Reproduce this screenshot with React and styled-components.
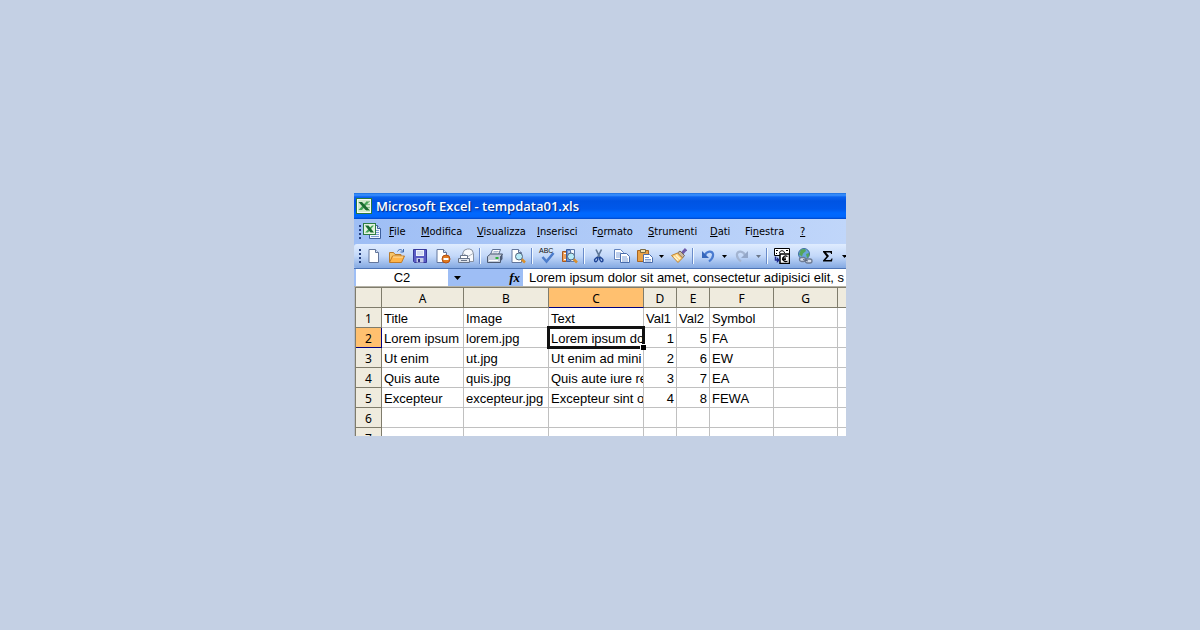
import { useState } from 'react';
import styled, { createGlobalStyle } from 'styled-components';

const GlobalStyle = createGlobalStyle`
    * {
        box-sizing: border-box;
    }

    body {
        margin: 0;
        background: #c4d0e4;
        font-family: "Liberation Sans", Arial, sans-serif;
        font-size: 13px;
        color: #000;
    }

    button, input {
        font: inherit;
        color: inherit;
        border: 0;
        padding: 0;
        margin: 0;
        background: none;
    }
`;

const Page = styled.main`
    min-height: 100vh;
    display: flex;
    align-items: center;
    justify-content: center;
    padding-bottom: 1px;
`;

const Window = styled.section`
    width: 41%;
    min-width: 320px;
    overflow: hidden;
    background: #9ebef5;
`;

const TitleBar = styled.header`
    height: 26px;
    display: flex;
    align-items: center;
    gap: 4px;
    padding: 0 2px;
    background: linear-gradient(#1c6fe0 0, #3c92ff 2px, #0a62ee 4px, #0054e3 8px, #0058ea 16px, #0068ff 20px, #0066fc 24px, #0046c8 26px);

    h1 {
        margin: 0;
        font: 600 13px "Open Sans", "Noto Sans", sans-serif;
        color: #fff;
        text-shadow: 1px 1px 1px #0a2a80;
        white-space: nowrap;
    }
`;

const Grip = styled.span`
    flex: none;
    width: 2px;
    height: 14px;
    margin-right: 1px;
    background: repeating-linear-gradient(#27417f 0 2px, transparent 2px 4px);
`;

const MenuBar = styled.nav`
    height: 25px;
    display: flex;
    align-items: center;
    padding-left: 5px;
    background: linear-gradient(90deg, #9ebef5, #c0d6fa);

    svg {
        flex: none;
        margin: 0 1px 2px;
    }
`;

const MenuButton = styled.button`
    flex: none;
    width: ${({ $width }) => $width}px;
    padding-left: 7px;
    text-align: left;
    font: 11px/16px "DejaVu Sans Condensed", "Noto Sans", sans-serif;
    white-space: nowrap;
`;

const Toolbar = styled.div`
    height: 24px;
    display: flex;
    align-items: center;
    padding-left: 5px;
    border-radius: 3px 0 0 3px;
    background: linear-gradient(#dfecff, #c3d8f9 50%, #84a9e2);
`;

const ToolButton = styled.button`
    flex: none;
    width: 23px;
    height: 22px;
    display: flex;
    align-items: center;
    justify-content: center;
`;

const ArrowButton = styled(ToolButton)`
    width: 11px;
    opacity: ${({ $dim }) => $dim ? .45 : 1};
`;

const Separator = styled.span`
    flex: none;
    width: 2px;
    height: 16px;
    margin: 0 2px;
    background: linear-gradient(90deg, #6a8ccb 50%, #f1f9ff 50%);
`;

const FormulaBar = styled.div`
    height: 18px;
    display: flex;
    padding-left: 2px;
    border-top: 1px solid #4f75b5;
    background: #9ebef5;
`;

const NameBox = styled.input`
    flex: none;
    width: 92px;
    background: #fff;
    text-align: center;
    outline: 0;
`;

const NameArrow = styled(ArrowButton)`
    width: 18px;
    height: 17px;
`;

const FxButton = styled.button`
    flex: none;
    width: 57px;
    padding-right: 3px;
    text-align: right;
    font: italic bold 13px/16px "Liberation Serif", "Times New Roman", serif;
`;

const FormulaInput = styled.input`
    flex: 1;
    min-width: 0;
    padding-left: 6px;
    background: #fff;
    outline: 0;
`;

const Sheet = styled.div`
    max-height: 150px;
    overflow: hidden;
    padding-left: 1px;
    border-top: 1px solid #b5b2a6;
    background: #b4bccb;
`;

const Table = styled.table`
    width: 100%;
    table-layout: fixed;
    border-collapse: separate;
    border-spacing: 0;
    border-top: 1px solid #7f7c6c;
    border-left: 1px solid #7f7c6c;
    background: #fff;

    tr > :last-child {
        border-right: 0;
    }
`;

const HeadCell = styled.th`
    height: 20px;
    padding: 0;
    border-right: 1px solid ${({ $active, $row }) => $active && $row ? '#00007f' : '#7f7c6c'};
    border-bottom: 1px solid ${({ $active }) => $active ? '#00007f' : '#7f7c6c'};
    background: ${({ $active }) => $active ? '#ffc06f' : '#efebde'};
    font: 12px/19px "Noto Sans", "DejaVu Sans", sans-serif;
    text-align: center;

    span {
        display: block;
        height: 19px;
        padding-top: 2px;
        line-height: 17px;
    }
`;

const Cell = styled.td`
    position: relative;
    height: 20px;
    padding: 0;
    border-right: 1px solid #c0c0c0;
    border-bottom: 1px solid #c0c0c0;
    text-align: ${({ $number }) => $number ? 'right' : 'left'};
`;

const CellText = styled.div`
    overflow: hidden;
    height: 19px;
    padding: 2px 2px 0;
    line-height: 17px;
    white-space: nowrap;
`;

const Selection = styled.span`
    position: absolute;
    inset: -2px;
    z-index: 1;
    border: 3px solid #111;
    pointer-events: none;

    &::after {
        content: '';
        position: absolute;
        right: -4px;
        bottom: -4px;
        width: 5px;
        height: 5px;
        background: #000;
        border-top: 1px solid #fff;
        border-left: 1px solid #fff;
    }
`;

const Icon = ({ children, size = 16 }) => (
    <svg width={size} height={size} viewBox="0 0 16 16" aria-hidden="true">{children}</svg>
);

const Sheetlet = () => <>
    <path d="M3 1.5h6.5l3 3v10H3z" fill="#fff" stroke="#63769c" />
    <path d="M9.500 1.500v3h3" fill="#d5e2f7" stroke="#63769c" />
</>;

const Magnifier = () => <>
    <path d="m11.500 11 3.500 3.500" stroke="#d98f2c" strokeWidth="2.500" />
    <circle cx="9" cy="8.500" r="3.500" fill="#b8ecf8" stroke="#54657e" />
</>;

const ExcelLogo = () => (
    <Icon>
        <path d="M0 0h16v16H0z" fill="#2b7a3c" />
        <path d="M1 1h14v14H1z" fill="#f7fbf3" />
        <path d="M2 2h12v12H2z" fill="#d3e9cd" />
        <path d="M10 3.500h4M11 6.500h3M11 9.500h3M10 12.500h4" stroke="#8cc08c" />
        <path d="M13 4h-3L2.500 12H6z" fill="#45a557" />
        <path d="M2.500 4H6l7.500 8h-4z" fill="#1b6b30" />
    </Icon>
);

const WorkbookLogo = () => (
    <svg width="18" height="16" viewBox="0 0 18 16" aria-hidden="true">
        <path d="M6.500 2.500h8l3 3v10h-11z" fill="#eef4ff" stroke="#3e5f9d" />
        <path d="M14.500 2.500v3h3" fill="#c8daf6" stroke="#3e5f9d" />
        <path d="M13 7.500h3M13 9.500h3M13 11.500h3M8 13.500h8" stroke="#7c9cd2" />
        <rect x=".5" y=".5" width="12" height="11" fill="#e3f2df" stroke="#2e7d43" />
        <path d="M11 2.500H9l-7 7h3z" fill="#45a557" />
        <path d="M2 2.500h3.500l5.500 7H7.500z" fill="#1b6b30" />
    </svg>
);

const NewIcon = () => <Icon><Sheetlet /></Icon>;

const OpenIcon = () => (
    <Icon>
        <path d="M.5 14V4.500h4l1.500 2h6V9" fill="#f7c66b" stroke="#b97b2c" />
        <path d="m.5 14.500 3-6.500h12l-3 6.500z" fill="#ffb54a" stroke="#c07a26" />
        <path d="M4 9h10" stroke="#ffe3a8" />
        <path d="M8.500 3.500C10 .8 12.500 1 14 3.500M14.500 1v3h-3" fill="none" stroke="#3a67b0" />
    </Icon>
);

const SaveIcon = () => (
    <Icon>
        <path d="M1.500 1.500h13v13h-12l-1-1z" fill="#5a5cc4" stroke="#37389a" />
        <path d="M4 2h8v6H4z" fill="#eef2fd" />
        <path d="M5 4h6M5 6h6" stroke="#b9c4e4" />
        <path d="M4.500 10h7v4.500h-7z" fill="#c4cbe8" />
        <path d="M6 11h2v3H6z" fill="#33358c" />
    </Icon>
);

const PermissionIcon = () => (
    <Icon>
        <g transform="translate(-1 0)"><Sheetlet /></g>
        <circle cx="11" cy="11" r="4" fill="#e07a20" stroke="#b44f10" />
        <path d="M8.500 11h5" stroke="#fff" strokeWidth="2" />
    </Icon>
);

const MailIcon = () => (
    <Icon>
        <path d="m4.500 5.500 2-3.500 3-1h2l2.500 1 1.500 3.500v8h-11z" fill="#f8fafd" stroke="#8791a1" />
        <path d="m5 5.500 5 3 5-3" fill="none" stroke="#a5aebb" />
        <path d="M2.500 7.500h7v3h-7z" fill="#fff" stroke="#68758b" />
        <path d="M.5 10.500h11v4H.5z" fill="#dfe4ec" stroke="#68758b" />
        <path d="M3 12.500h6" stroke="#68758b" />
    </Icon>
);

const PrintIcon = () => (
    <Icon>
        <path d="m5.500 1.500 8 0-2 5h-8z" fill="#fff" stroke="#5c6f92" />
        <path d="M6.500 3.500h5M5.500 5h5" stroke="#a9b7cf" />
        <path d="m.5 8.500 3-2.500h12l-2 3v5.500H.5z" fill="#c3ccda" stroke="#4b5870" />
        <path d="m13 9 2.500-3v5L13 14z" fill="#4d5b76" />
        <path d="M2 12.500h9" stroke="#fff" />
        <path d="M8.500 10h3" stroke="#2eb33c" strokeWidth="2" />
    </Icon>
);

const PreviewIcon = () => <Icon><g transform="translate(-1 0)"><Sheetlet /></g><Magnifier /></Icon>;

const SpellingIcon = () => (
    <svg width="18" height="20" viewBox="0 0 18 20" aria-hidden="true">
        <text x="1" y="7" fontFamily="Liberation Sans, Arial, sans-serif" fontSize="7" fill="#111">ABC</text>
        <path d="m4.500 11 4 4.500L15.500 7" fill="none" stroke="#4c7ccb" strokeWidth="2.500" />
    </svg>
);

const ResearchIcon = () => (
    <Icon>
        <path d="M.5 3.500h4v10h-4z" fill="#eda05a" stroke="#a7581e" />
        <path d="M4.500 1.500h4v12h-4z" fill="#6d93d6" stroke="#3c5e9e" />
        <path d="M8.500 1.500h4v12h-4z" fill="#edf3fc" stroke="#5c79ab" />
        <path d="M2 5.500h2M6 4h2M10 4h2M2 11.500h2" stroke="#fff" />
        <Magnifier />
    </Icon>
);

const CutIcon = () => (
    <Icon>
        <path d="M5 1.500 9.500 10.500M10.500 1.500 6 10.500" stroke="#5d7696" strokeWidth="1.600" />
        <path d="m6.500 9-2 1.500c-2 1.500-.5 4 1 3s1.500-3 1.500-4.500M9 9l2 1.500c2 1.500.5 4-1 3S8.500 10.500 8.500 9" fill="none" stroke="#1f4596" strokeWidth="1.500" />
    </Icon>
);

const CopyIcon = () => (
    <Icon>
        <path d="M.5 1.500h6l3 3v7h-9z" fill="#fff" stroke="#6283bd" />
        <path d="M2 5h5M2 7h5M2 9h5" stroke="#7fa0d8" />
        <path d="M6.500 5.500h6l3 3v6h-9z" fill="#fff" stroke="#496cab" />
        <path d="M8 9h5M8 11h6M8 13h6" stroke="#7fa0d8" />
    </Icon>
);

const PasteIcon = () => (
    <Icon>
        <path d="M.5 2.500h11v11H.5z" fill="#e9a145" stroke="#a76522" />
        <path d="M3.500 1.500h5v3h-5z" fill="#f1dfaf" stroke="#7b6a42" />
        <path d="M6.500 6.500h6l3 3v5h-9z" fill="#fff" stroke="#4b6dab" />
        <path d="M8 9.500h4M8 11.500h6M8 13h6" stroke="#7fa0d8" />
    </Icon>
);

const BrushIcon = () => (
    <Icon>
        <path d="m11 5.500 4-4.500" stroke="#6d5aa8" strokeWidth="3" />
        <path d="m9 3 4.500 4.500-2 2.500L6.500 5z" fill="#c9b8a4" stroke="#77685c" />
        <path d="M6.500 5 .5 7.500 7 14.500l4.500-4.500z" fill="#ffd27c" stroke="#bf8432" />
        <path d="m3 8.500 4 4M5 7l4 4" stroke="#fff3cf" strokeWidth="1.500" />
    </Icon>
);

const UndoIcon = () => (
    <Icon>
        <path d="M5 7c2-4 7-4.500 8-1 .5 3-1.500 5.500-4 7.500" fill="none" stroke="#4a7bd0" strokeWidth="2.200" />
        <path d="M2 3v7h7z" fill="#3767bb" />
    </Icon>
);

const RedoIcon = () => (
    <Icon>
        <path d="M11 7C9 3 4 2.500 3 6c-.5 3 1.500 5.500 4 7.500" fill="none" stroke="#a3b4d1" strokeWidth="2.200" />
        <path d="M14 3v7H7z" fill="#94a7c8" />
    </Icon>
);

const EuroIcon = () => (
    <Icon>
        <path d="M.5.500h15v7H.5z" fill="#fff" stroke="#000" />
        <path d="M2 2.500h2M12 2.500h2M2 5.500h1" stroke="#000" />
        <path d="M5.500 5c0-3 5-3 5 0" fill="none" stroke="#000" />
        <path d="M6 6h9.500v9.500H6z" fill="#fff" stroke="#000" strokeWidth="1.500" />
        <path d="M13.500 8.500C11 7 9 8.500 9 10.800s2 3.700 4.500 2.200M8 10.200h4M8 11.700h4" fill="none" stroke="#000" strokeWidth="1.200" />
        <path d="M1.500 8.500V12h2" fill="none" stroke="#1c2a8c" strokeWidth="1.500" />
        <path d="M2.800 9v6L6 12z" fill="#1c2a8c" />
    </Icon>
);

const LinkIcon = () => (
    <Icon>
        <circle cx="7" cy="6" r="5.500" fill="#6aa5dd" stroke="#3f6f9f" />
        <path d="M4 1.500 8 1l1 2-3 2.500-1 3-3-2z" fill="#55a55a" />
        <path d="m9 6 3-1v3l-2 2z" fill="#55a55a" />
        <rect x="2.500" y="9.500" width="6" height="4" rx="2" fill="#d7dfec" stroke="#6e7c94" strokeWidth="1.300" />
        <rect x="8.500" y="11" width="6.500" height="4" rx="2" fill="#d7dfec" stroke="#6e7c94" strokeWidth="1.300" />
        <path d="m6 11.500 5 1.500" stroke="#56637b" />
    </Icon>
);

const SumIcon = () => (
    <Icon>
        <path d="M3 3h9v3h-1c0-1-.5-1.500-1.500-1.500H6L9 8l-3.500 4H9.500c1.200 0 1.700-.5 2-1.500h1l-.5 3H3v-1L6.500 8.500 3 4z" fill="#000" />
    </Icon>
);

const Caret = ({ size = 5 }) => (
    <svg width={size} height={size == 5 ? 3 : 4} viewBox="0 0 7 4" preserveAspectRatio="none" aria-hidden="true">
        <path d="M0 0h7L3.500 4z" fill="#000" />
    </svg>
);

// [before, underlined key, after, width]
const MENUS = [
    ['', 'F', 'ile', 32],
    ['', 'M', 'odifica', 56],
    ['', 'V', 'isualizza', 60],
    ['', 'I', 'nserisci', 55],
    ['F', 'o', 'rmato', 56],
    ['', 'S', 'trumenti', 62],
    ['', 'D', 'ati', 35],
    ['Fi', 'n', 'estra', 55],
    ['', '?', '', 24],
];

const TOOLS = [
    ['Nuovo', NewIcon],
    ['Apri', OpenIcon],
    ['Salva', SaveIcon],
    ['Autorizzazione', PermissionIcon],
    ['Posta elettronica', MailIcon],
    null,
    ['Stampa', PrintIcon],
    ['Anteprima di stampa', PreviewIcon],
    null,
    ['Controllo ortografia', SpellingIcon],
    ['Ricerche', ResearchIcon],
    null,
    ['Taglia', CutIcon],
    ['Copia', CopyIcon],
    ['Incolla', PasteIcon, 'arrow'],
    ['Copia formato', BrushIcon],
    null,
    ['Annulla', UndoIcon, 'arrow'],
    ['Ripristina', RedoIcon, 'dim'],
    null,
    ['Euro', EuroIcon],
    ['Collegamento ipertestuale', LinkIcon],
    ['Somma automatica', SumIcon, 'arrow'],
];

const COLUMNS = [
    ['A', 82],
    ['B', 85],
    ['C', 95],
    ['D', 33],
    ['E', 33],
    ['F', 64],
    ['G', 64],
    ['', null],
];

const ROWS = [
    ['Title', 'Image', 'Text', 'Val1', 'Val2', 'Symbol'],
    ['Lorem ipsum', 'lorem.jpg', 'Lorem ipsum do', 1, 5, 'FA'],
    ['Ut enim', 'ut.jpg', 'Ut enim ad mini', 2, 6, 'EW'],
    ['Quis aute', 'quis.jpg', 'Quis aute iure re', 3, 7, 'EA'],
    ['Excepteur', 'excepteur.jpg', 'Excepteur sint o', 4, 8, 'FEWA'],
    [],
    [],
];

const ACTIVE = { row: 1, col: 2 };

function Tool({ tool }) {
    if (!tool) return <Separator />;

    const [label, Glyph, arrow] = tool;

    return <>
        <ToolButton type="button" aria-label={label}><Glyph /></ToolButton>
        {arrow && (
            <ArrowButton type="button" aria-label={`${label}: opzioni`} $dim={arrow == 'dim'}>
                <Caret />
            </ArrowButton>
        )}
    </>;
}

function Grid() {
    return <Sheet>
        <Table>
            <colgroup>
                <col width="26" />
                {COLUMNS.map(([name, width], i) => <col key={i} width={width ?? undefined} />)}
            </colgroup>
            <thead>
                <tr>
                    <HeadCell />
                    {COLUMNS.map(([name], i) => (
                        <HeadCell key={i} scope="col" $active={i == ACTIVE.col}><span>{name}</span></HeadCell>
                    ))}
                </tr>
            </thead>
            <tbody>
                {ROWS.map((row, r) => (
                    <tr key={r}>
                        <HeadCell scope="row" $row $active={r == ACTIVE.row}><span>{r + 1}</span></HeadCell>
                        {COLUMNS.map((column, c) => (
                            <Cell key={c} $number={typeof row[c] == 'number'}>
                                <CellText>{row[c]}</CellText>
                                {r == ACTIVE.row && c == ACTIVE.col && <Selection />}
                            </Cell>
                        ))}
                    </tr>
                ))}
            </tbody>
        </Table>
    </Sheet>;
}

export default function App() {
    const [cell, setCell] = useState('C2');
    const [formula, setFormula] = useState('Lorem ipsum dolor sit amet, consectetur adipisici elit, s');

    return <>
        <GlobalStyle />
        <Page>
            <Window>
                <TitleBar>
                    <ExcelLogo />
                    <h1>Microsoft Excel - tempdata01.xls</h1>
                </TitleBar>
                <MenuBar>
                    <Grip />
                    <WorkbookLogo />
                    {MENUS.map(([before, key, after, width]) => (
                        <MenuButton key={key + after} type="button" $width={width}>
                            {before}<u>{key}</u>{after}
                        </MenuButton>
                    ))}
                </MenuBar>
                <Toolbar>
                    <Grip />
                    {TOOLS.map((tool, i) => <Tool key={i} tool={tool} />)}
                </Toolbar>
                <FormulaBar>
                    <NameBox aria-label="Casella nome" value={cell} onChange={(e) => setCell(e.target.value)} />
                    <NameArrow type="button" aria-label="Elenco nomi"><Caret size={7} /></NameArrow>
                    <FxButton type="button" aria-label="Inserisci funzione">fx</FxButton>
                    <FormulaInput aria-label="Barra della formula" value={formula} onChange={(e) => setFormula(e.target.value)} />
                </FormulaBar>
                <Grid />
            </Window>
        </Page>
    </>;
}
